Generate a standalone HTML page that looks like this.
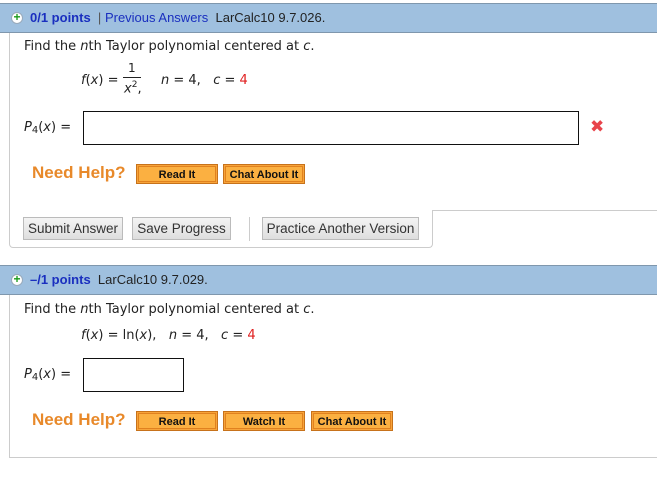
<!DOCTYPE html>
<html><head><style>
*{margin:0;padding:0;box-sizing:border-box}
body{width:657px;height:481px;background:#fff;position:relative;overflow:hidden;font-family:"DejaVu Sans","Liberation Sans",sans-serif;font-size:13px;color:#222}
.a{position:absolute;white-space:nowrap}
.bar{position:absolute;left:0;width:657px;background:#9fc0df;border-top:1px solid #7f97ad;border-bottom:1px solid #7f97ad;font-family:"Liberation Sans",sans-serif;font-size:13px}
.plus{position:absolute;left:11px;width:12px;height:12px;border-radius:50%;background:#fff;border:1px solid #9ab;}
.plus:before{content:"+";position:absolute;left:0;top:-3px;width:10px;text-align:center;color:#1a9a1a;font-weight:bold;font-size:12px}
.blue{color:#1a2fbf}
.ob{position:absolute;height:20px;background:#f7a43a;border:1px solid #c7721b;font-family:"Liberation Sans",sans-serif;font-weight:bold;font-size:11px;color:#111;text-align:center;line-height:16px;padding:1px}
.ob span{display:block;border:1px solid #e0811f;background:#fbb041;height:16px}
.gb{position:absolute;height:23px;background:linear-gradient(#f4f4f4,#dedede);border:1px solid #bbb;font-family:"Liberation Sans",sans-serif;font-size:13.5px;color:#333;text-align:center;line-height:21px}
.nh{position:absolute;font-family:"Liberation Sans",sans-serif;font-weight:bold;font-size:17px;color:#e8892a}
.inp{position:absolute;border:1px solid #111;background:#fff}
i{font-style:italic}
.r{color:#e02020}
sub{font-size:10px;vertical-align:-2px}
</style></head><body>
<div class="bar" style="top:3px;height:30px">
<div class="plus" style="top:8px"></div>
<div class="a" style="left:30px;top:6px"><b class="blue">0/1 points</b> &nbsp;<span style="color:#555">|</span> <span class="blue">Previous Answers</span> &nbsp;LarCalc10 9.7.026.</div>
</div>
<div class="a" style="left:9px;top:33px;width:1px;height:206px;background:#ccc"></div>
<div class="a" style="left:9px;top:228px;width:424px;height:20px;border-left:1px solid #ccc;border-bottom:1px solid #ccc;border-right:1px solid #ccc;border-radius:0 0 4px 4px;border-top:none"></div>
<div class="a" style="left:432px;top:210px;width:225px;height:1px;background:#ccc"></div>
<div class="a" style="left:432px;top:210px;width:1px;height:30px;background:#ccc"></div>

<div class="a" style="left:24px;top:39px">Find the <i>n</i>th Taylor polynomial centered at <i>c</i>.</div>
<div class="a" style="left:81px;top:73px"><i>f</i>(<i>x</i>) =</div>
<div class="a" style="left:128px;top:61px;font-size:12px">1</div>
<div class="a" style="left:123px;top:77px;width:18px;height:1px;background:#222"></div>
<div class="a" style="left:124px;top:80px"><i>x</i><sup style="font-size:9px">2</sup>,</div>
<div class="a" style="left:161px;top:73px"><i>n</i> = 4, &nbsp; <i>c</i> = <span class="r">4</span></div>

<div class="a" style="left:24px;top:120px"><i>P</i><sub>4</sub>(<i>x</i>) =</div>
<div class="inp" style="left:83px;top:111px;width:496px;height:34px"></div>
<div class="a" style="left:590px;top:117px;color:#e8434a;font-size:17px;font-weight:bold;font-family:'DejaVu Sans',sans-serif">✖</div>

<div class="nh" style="left:32px;top:163px">Need Help?</div>
<div class="ob" style="left:136px;top:164px;width:82px"><span>Read It</span></div>
<div class="ob" style="left:223px;top:164px;width:82px"><span>Chat About It</span></div>

<div class="gb" style="left:23px;top:217px;width:100px">Submit Answer</div>
<div class="gb" style="left:132px;top:217px;width:99px">Save Progress</div>
<div class="a" style="left:249px;top:217px;width:1px;height:24px;background:#ccc"></div>
<div class="gb" style="left:262px;top:217px;width:157px">Practice Another Version</div>

<div class="bar" style="top:265px;height:30px">
<div class="plus" style="top:8px"></div>
<div class="a" style="left:30px;top:6px"><b class="blue">–/1 points</b> &nbsp;LarCalc10 9.7.029.</div>
</div>
<div class="a" style="left:9px;top:295px;width:648px;height:163px;border-left:1px solid #ccc;border-bottom:1px solid #ccc"></div>
<div class="a" style="left:24px;top:302px">Find the <i>n</i>th Taylor polynomial centered at <i>c</i>.</div>
<div class="a" style="left:81px;top:328px"><i>f</i>(<i>x</i>) = ln(<i>x</i>), &nbsp; <i>n</i> = 4, &nbsp; <i>c</i> = <span class="r">4</span></div>
<div class="a" style="left:24px;top:367px"><i>P</i><sub>4</sub>(<i>x</i>) =</div>
<div class="inp" style="left:83px;top:358px;width:101px;height:34px"></div>
<div class="nh" style="left:32px;top:410px">Need Help?</div>
<div class="ob" style="left:136px;top:411px;width:82px"><span>Read It</span></div>
<div class="ob" style="left:223px;top:411px;width:82px"><span>Watch It</span></div>
<div class="ob" style="left:311px;top:411px;width:82px"><span>Chat About It</span></div>
</body></html>
